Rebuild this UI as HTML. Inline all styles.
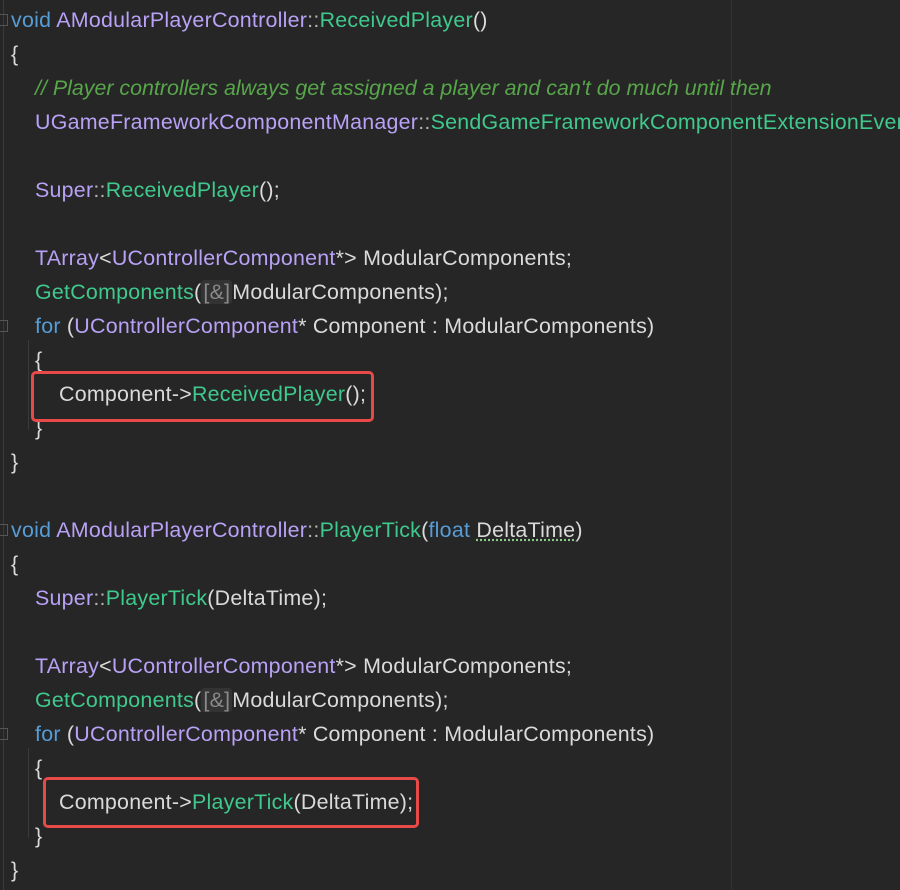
<!DOCTYPE html>
<html><head><style>
body{margin:0;width:900px;height:890px;background:#262626;overflow:hidden;position:relative;font-family:"Liberation Sans",sans-serif;font-size:21.4px;color:#dadada}
.l{position:absolute;height:34px;line-height:34px;white-space:nowrap;letter-spacing:0.25px}
.k{color:#569cd6}.c{color:#b8a1f6}.f{color:#3fc98c}.m{color:#57a64a;font-style:italic;letter-spacing:0}.g{color:#b4b4b4}
.h{color:#8a8a8a;background:#333;border-radius:3px;padding:0 2px}
.box{position:absolute;border:3px solid #e84a4a;border-radius:5px;box-sizing:border-box}
.vl{position:absolute;width:1px;background:#444}
.fm{position:absolute;left:0;width:8px;height:12px;border:1px solid #555;border-left:none;box-sizing:border-box}
</style></head><body>
<div class="vl" style="left:731px;top:0;height:890px;background:#333"></div>
<div class="vl" style="left:3px;top:0;height:890px;background:#3a3a3a"></div>
<div class="vl" style="left:28px;top:340px;height:90px;background:#3a3a3a"></div>
<div class="vl" style="left:28px;top:748px;height:90px;background:#3a3a3a"></div>
<div class="fm" style="top:14px"></div><div class="fm" style="top:320px"></div><div class="fm" style="top:524px"></div><div class="fm" style="top:728px"></div>
<div class="l" style="left:11px;top:3px"><span class="k">void</span> <span class="c">AModularPlayerController</span><span class="g">::</span><span class="f">ReceivedPlayer</span>()</div>
<div class="l" style="left:11px;top:37px">{</div>
<div class="l m" style="left:35px;top:71px">// Player controllers always get assigned a player and can't do much until then</div>
<div class="l" style="left:35px;top:105px"><span class="c">UGameFrameworkComponentManager</span><span class="g">::</span><span class="f">SendGameFrameworkComponentExtensionEvent</span>(</div>
<div class="l" style="left:35px;top:173px"><span class="c">Super</span><span class="g">::</span><span class="f">ReceivedPlayer</span>();</div>
<div class="l" style="left:35px;top:241px"><span class="c">TArray</span>&lt;<span class="c">UControllerComponent</span>*&gt; ModularComponents;</div>
<div class="l" style="left:35px;top:275px"><span class="f">GetComponents</span>(<span class="h">[&amp;]</span>ModularComponents);</div>
<div class="l" style="left:35px;top:309px"><span class="k">for</span> (<span class="c">UControllerComponent</span>* Component : ModularComponents)</div>
<div class="l" style="left:35px;top:343px">{</div>
<div class="l" style="left:59px;top:377px">Component-&gt;<span class="f">ReceivedPlayer</span>();</div>
<div class="l" style="left:35px;top:411px">}</div>
<div class="l" style="left:11px;top:445px">}</div>
<div class="l" style="left:11px;top:513px"><span class="k">void</span> <span class="c">AModularPlayerController</span><span class="g">::</span><span class="f">PlayerTick</span>(<span class="k">float</span> <span style="text-decoration:underline dotted #8c8;">DeltaTime</span>)</div>
<div class="l" style="left:11px;top:547px">{</div>
<div class="l" style="left:35px;top:581px"><span class="c">Super</span><span class="g">::</span><span class="f">PlayerTick</span>(DeltaTime);</div>
<div class="l" style="left:35px;top:649px"><span class="c">TArray</span>&lt;<span class="c">UControllerComponent</span>*&gt; ModularComponents;</div>
<div class="l" style="left:35px;top:683px"><span class="f">GetComponents</span>(<span class="h">[&amp;]</span>ModularComponents);</div>
<div class="l" style="left:35px;top:717px"><span class="k">for</span> (<span class="c">UControllerComponent</span>* Component : ModularComponents)</div>
<div class="l" style="left:35px;top:751px">{</div>
<div class="l" style="left:59px;top:785px">Component-&gt;<span class="f">PlayerTick</span>(DeltaTime);</div>
<div class="l" style="left:35px;top:819px">}</div>
<div class="l" style="left:11px;top:853px">}</div>
<div class="box" style="left:31px;top:371px;width:343px;height:51px"></div>
<div class="box" style="left:43px;top:777px;width:376px;height:51px"></div>
</body></html>
